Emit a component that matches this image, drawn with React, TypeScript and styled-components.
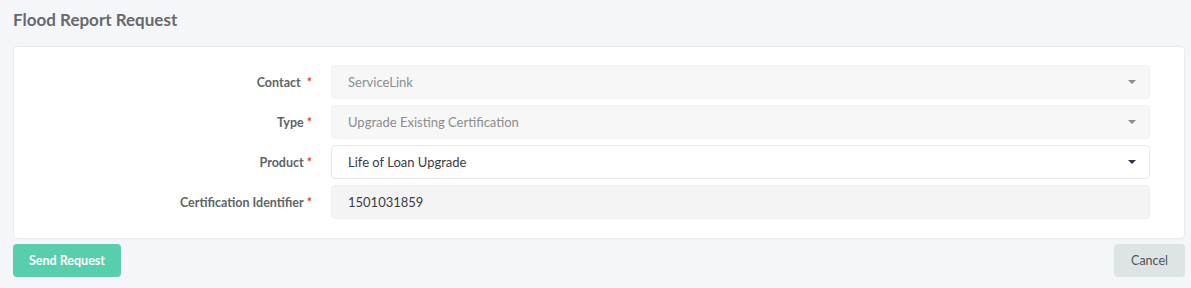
import React from "react";
import styled, { createGlobalStyle } from "styled-components";

const Global = createGlobalStyle`
  html, body { margin: 0; padding: 0; background: #f5f6fa; }
  body { font-family: "Lato", "Open Sans", sans-serif; }
  * { box-sizing: border-box; }
`;

const Page = styled.div`
  padding: 7px 6px 0 13px;
  width: 1191px;
`;

const Title = styled.h1`
  margin: 0;
  height: 31px;
  line-height: 26px;
  font-size: 17px;
  font-weight: 700;
  color: #66696d;
`;

const Card = styled.div`
  margin-top: 8px;
  background: #fff;
  border: 1px solid #e8eaee;
  border-radius: 4px;
  padding: 18px 34px 19px 0;
  display: flex;
  flex-direction: column;
  gap: 6px;
`;

const Row = styled.div`
  display: grid;
  grid-template-columns: 317px 1fr;
  align-items: center;
`;

const Label = styled.label`
  text-align: right;
  padding-right: 19px;
  font-size: 12.5px;
  font-weight: 700;
  color: #606468;
`;

const Star = styled.span<{ $wide?: boolean }>`
  color: #ee3b3b;
  margin-left: ${(p) => (p.$wide ? "6px" : "3px")};
`;

const Field = styled.div<{ $variant: "disabled" | "active" | "readonly" }>`
  height: 34px;
  border-radius: 4px;
  border: 1px solid
    ${(p) => (p.$variant === "active" ? "#e6e8eb" : p.$variant === "readonly" ? "#eeeeee" : "#f1f1f1")};
  background: ${(p) =>
    p.$variant === "active" ? "#fff" : p.$variant === "readonly" ? "#f4f4f4" : "#f7f7f7"};
  display: flex;
  align-items: center;
  justify-content: space-between;
  padding: 0 13px 0 16px;
  font-size: 13px;
  color: ${(p) => (p.$variant === "disabled" ? "#8a8d91" : "#3a3d42")};
`;

const Caret = styled.span<{ $dark?: boolean }>`
  width: 0;
  height: 0;
  border-left: 4px solid transparent;
  border-right: 4px solid transparent;
  border-top: 4px solid ${(p) => (p.$dark ? "#2f3140" : "#8a8c94")};
`;

const Footer = styled.div`
  display: flex;
  justify-content: space-between;
  margin-top: 5px;
`;

const Button = styled.button<{ $primary?: boolean }>`
  height: 33px;
  border: none;
  border-radius: 4px;
  font-family: inherit;
  font-size: 12.5px;
  font-weight: ${(p) => (p.$primary ? 700 : 400)};
  padding: 0 ${(p) => (p.$primary ? "16px" : "17px")};
  background: ${(p) => (p.$primary ? "#57cfad" : "#dde4e6")};
  color: ${(p) => (p.$primary ? "#ffffff" : "#505458")};
`;

const rows = [
  { label: "Contact", value: "ServiceLink", variant: "disabled" as const, caret: true, wide: true },
  { label: "Type", value: "Upgrade Existing Certification", variant: "disabled" as const, caret: true },
  { label: "Product", value: "Life of Loan Upgrade", variant: "active" as const, caret: true },
  { label: "Certification Identifier", value: "1501031859", variant: "readonly" as const, caret: false },
];

export default function App() {
  return (
    <>
      <Global />
      <Page>
        <Title>Flood Report Request</Title>
        <Card>
          {rows.map((r) => (
            <Row key={r.label}>
              <Label>
                {r.label}
                <Star $wide={r.wide}>*</Star>
              </Label>
              <Field $variant={r.variant}>
                <span>{r.value}</span>
                {r.caret && <Caret $dark={r.variant === "active"} />}
              </Field>
            </Row>
          ))}
        </Card>
        <Footer>
          <Button $primary>Send Request</Button>
          <Button>Cancel</Button>
        </Footer>
      </Page>
    </>
  );
}
